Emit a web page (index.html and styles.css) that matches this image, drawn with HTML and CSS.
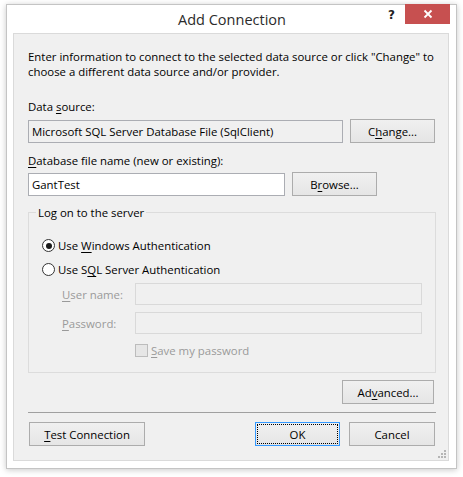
FILE: index.html
```html
<!DOCTYPE html>
<html>
<head>
<meta charset="utf-8">
<link rel="stylesheet" href="styles.css">
</head>
<body>
<div class="window">
  <div class="titlebar">
    <div class="title">Add Connection</div>
    <div class="help">?</div>
    <div class="close"><svg width="10" height="10" viewBox="0 0 10 10"><path d="M1.5 1.5 L8.5 8.5 M8.5 1.5 L1.5 8.5" stroke="#fff" stroke-width="1.8"/></svg></div>
  </div>
  <div class="client">
    <p class="intro">Enter information to connect to the selected data source or click "Change" to choose a different data source and/or provider.</p>
    <div class="label l-ds">Data <u>s</u>ource:</div>
    <div class="row r-ds">
      <div class="textbox readonly ds-box">Microsoft SQL Server Database File (SqlClient)</div>
      <button class="btn">C<u>h</u>ange...</button>
    </div>
    <div class="label l-db"><u>D</u>atabase file name (new or existing):</div>
    <div class="row r-db">
      <div class="textbox db-box">GantTest</div>
      <button class="btn">B<u>r</u>owse...</button>
    </div>
    <fieldset class="group">
      <legend>Log on to the server</legend>
      <div class="radio-row r1"><span class="radio checked"></span><span>Use <u>W</u>indows Authentication</span></div>
      <div class="radio-row r2"><span class="radio"></span><span>Use S<u>Q</u>L Server Authentication</span></div>
      <div class="field-row f-user"><span class="flabel"><u>U</u>ser name:</span><span class="textbox disabled"></span></div>
      <div class="field-row f-pass"><span class="flabel"><u>P</u>assword:</span><span class="textbox disabled"></span></div>
      <div class="check-row"><span class="checkbox"></span><span class="flabel"><u>S</u>ave my password</span></div>
    </fieldset>
    <div class="adv-row"><button class="btn adv">Ad<u>v</u>anced...</button></div>
    <div class="separator"></div>
    <div class="bottom-row">
      <button class="btn test"><u>T</u>est Connection</button>
      <div class="spacer"></div>
      <button class="btn ok">OK</button>
      <button class="btn cancel">Cancel</button>
    </div>
    <svg class="grip" width="8" height="8" viewBox="0 0 8 8">
      <g fill="#b5b5b5">
        <rect x="6" y="0" width="2" height="2"/>
        <rect x="3" y="3" width="2" height="2"/><rect x="6" y="3" width="2" height="2"/>
        <rect x="0" y="6" width="2" height="2"/><rect x="3" y="6" width="2" height="2"/><rect x="6" y="6" width="2" height="2"/>
      </g>
    </svg>
  </div>
</div>
</body>
</html>
```
FILE: styles.css
```css
* { box-sizing: border-box; }
html, body { margin: 0; padding: 0; background: #ffffff; }
body {
  width: 463px; height: 477px;
  padding: 4px 0 0 6px;
  font-family: "Open Sans", "Noto Sans", sans-serif;
  font-size: 11.4px;
  line-height: 15px;
  color: #000;
}
u { text-decoration: underline; text-underline-offset: 2px; }
.window {
  width: 451px; height: 465px;
  background: #fff;
  border: 1px solid #c4c4c4;
  box-shadow: 0 1px 6px rgba(0,0,0,0.22);
  display: flex; flex-direction: column;
}
.titlebar {
  height: 28px;
  display: flex; align-items: flex-start;
  position: relative;
}
.title {
  flex: 1;
  text-align: center;
  font-size: 14.5px;
  line-height: 20px;
  padding-top: 5px;
  color: #2b2b2b;
  padding-left: 1px;
}
.help {
  position: absolute; left: 381px; top: 3px;
  font-weight: bold; font-size: 12px; color: #222;
  font-family: "DejaVu Sans", sans-serif;
}
.close {
  position: absolute; right: 6px; top: -1px;
  width: 45px; height: 20px;
  background: #c75050;
  display: flex; align-items: center; justify-content: center;
}
.client {
  position: relative;
  margin: 0 7px 7px 6px;
  flex: 1;
  background: #f0f0f0;
  border: 1px solid #dadada;
  padding: 15px 12px 0 14px;
}
.intro { margin: 0; }
.label { height: 15px; }
.l-ds { margin-top: 20px; }
.row { display: flex; align-items: center; gap: 7px; height: 24px; }
.r-ds { margin-top: 5px; }
.l-db { margin-top: 10px; }
.r-db { margin-top: 4px; }
.textbox {
  height: 23px;
  border: 1px solid #abadb3;
  background: #fff;
  padding: 3px 3px;
  white-space: nowrap;
}
.readonly { background: #f0f0f0; }
.ds-box { width: 315px; }
.db-box { width: 257px; }
.btn {
  font: inherit;
  color: #000;
  height: 24px;
  width: 85px;
  border: 1px solid #acacac;
  background: linear-gradient(#f0f0f0, #e5e5e5);
  padding: 0;
  margin: 0;
}
.group {
  margin: 9px 0 0 0;
  padding: 0 0 15px 7px;
  border: 1px solid #dcdcdc;
  min-width: 0;
}
.group legend { padding: 0 2px; line-height: 15px; }
.radio-row { display: flex; align-items: center; height: 15px; margin-left: 6px; gap: 3px; }
.r1 { margin-top: 18px; }
.r2 { margin-top: 9px; }
.radio {
  width: 13px; height: 13px;
  border: 1px solid #333;
  border-radius: 50%;
  background: #fff;
  display: flex; align-items: center; justify-content: center;
}
.radio.checked::after {
  content: ""; width: 6px; height: 6px; border-radius: 50%; background: #1a1a1a;
}
.field-row { display: flex; align-items: center; height: 22px; padding-left: 26px; }
.f-user { margin-top: 6px; }
.f-pass { margin-top: 7px; }
.flabel { color: #9a9a9a; }
.field-row .flabel { width: 73px; }
.textbox.disabled { width: 287px; height: 22px; background: #f0f0f0; border-color: #d9d9d9; }
.check-row { display: flex; align-items: center; height: 13px; margin-top: 10px; padding-left: 99px; gap: 3px; }
.checkbox { width: 13px; height: 13px; border: 1px solid #bcbcbc; background: #e6e6e6; }
.adv-row { display: flex; justify-content: flex-end; margin-top: 7px; padding-right: 2px; }
.adv { width: 92px; }
.separator { height: 1px; background: #a0a0a0; margin-top: 8px; }
.bottom-row { display: flex; margin-top: 9px; padding-left: 1px; padding-right: 1px; }
.spacer { flex: 1; }
.test { width: 116px; }
.ok { border-color: #3399ff; outline: 1px dotted #000; outline-offset: -3px; }
.cancel { width: 86px; margin-left: 9px; }
.grip { position: absolute; right: 2px; bottom: 2px; }
```
